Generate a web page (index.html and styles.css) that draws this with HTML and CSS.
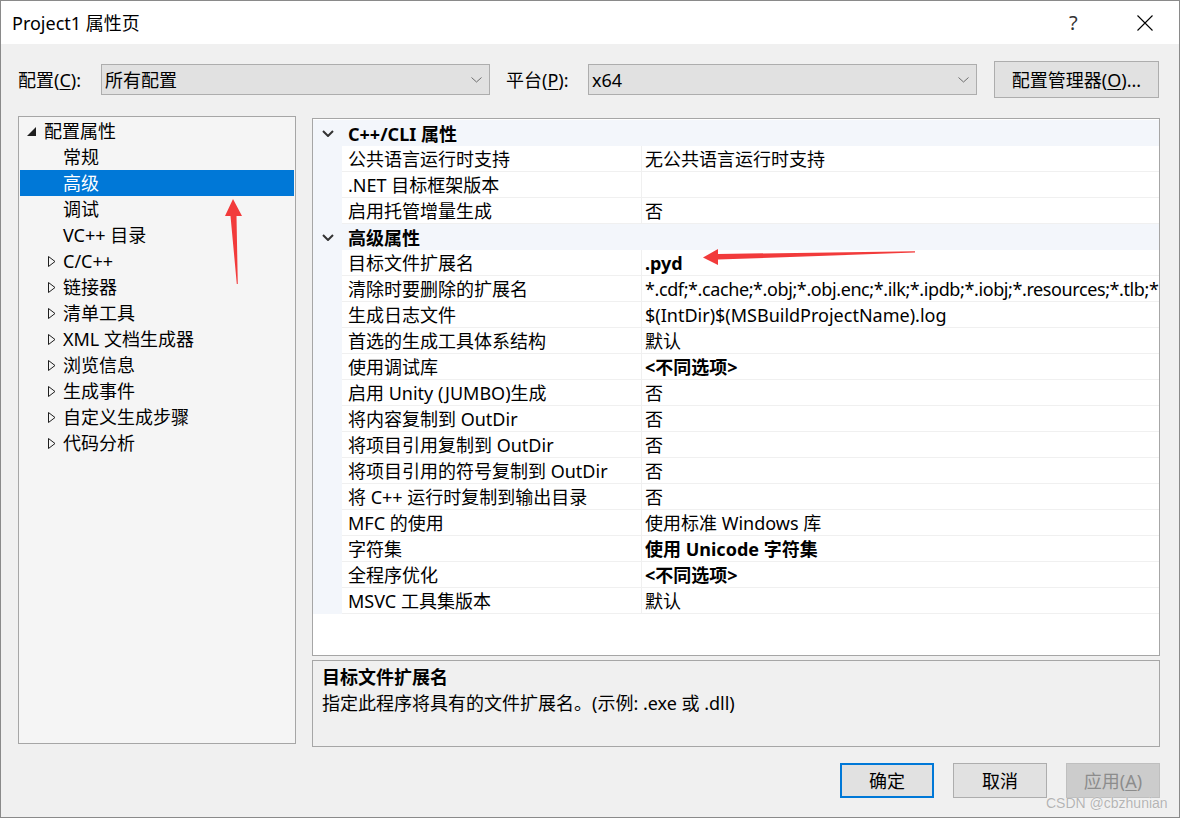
FILE: index.html
```html
<!DOCTYPE html>
<html lang="zh-CN">
<head>
	<meta charset="UTF-8">
	<title>Project1 属性页</title>
	<link rel="stylesheet" href="styles.css">
</head>
<body>
<div class="dlg">
	<div class="dlg-title">
		<span class="dlg-title-text">Project1 属性页</span>
		<span class="dlg-help">?</span>
		<span class="dlg-close">
			<svg width="16" height="16" viewBox="0 0 16 16"><path d="M0.5 0.5L15.5 15.5M15.5 0.5L0.5 15.5" stroke="#000" stroke-width="1.1" fill="none"/></svg>
		</span>
	</div>
	<div class="dlg-body">
		<div class="toolbar">
			<span class="tb-label tb-label-cfg">配置(<u>C</u>):</span>
			<div class="combo">
				<span class="combo-text">所有配置</span>
				<svg class="combo-arrow" width="11" height="6" viewBox="0 0 11 6"><path d="M0.5 0.5L5.5 5L10.5 0.5" stroke="#6d6d6d" fill="none"/></svg>
			</div>
			<span class="tb-label tb-label-plat">平台(<u>P</u>):</span>
			<div class="combo">
				<span class="combo-text">x64</span>
				<svg class="combo-arrow" width="11" height="6" viewBox="0 0 11 6"><path d="M0.5 0.5L5.5 5L10.5 0.5" stroke="#6d6d6d" fill="none"/></svg>
			</div>
			<span class="btn btn-manager">配置管理器(<u>O</u>)...</span>
		</div>

		<div class="main">
			<div class="tree">
				<div class="node node-root">
					<span class="twisty"><svg width="9" height="9" viewBox="0 0 9 9"><path d="M9 0L9 9L0 9Z" fill="#1e1e1e"/></svg></span>
					<span>配置属性</span>
				</div>
				<div class="node node-leaf">常规</div>
				<div class="node node-leaf node-current">高级</div>
				<div class="node node-leaf">调试</div>
				<div class="node node-leaf">VC++ 目录</div>
				<div class="node node-sub"><span class="twisty"><svg width="8" height="11" viewBox="0 0 8 11"><path d="M0.5 0.5L7 5.5L0.5 10.5Z" stroke="#1e1e1e" fill="none"/></svg></span><span>C/C++</span></div>
				<div class="node node-sub"><span class="twisty"><svg width="8" height="11" viewBox="0 0 8 11"><path d="M0.5 0.5L7 5.5L0.5 10.5Z" stroke="#1e1e1e" fill="none"/></svg></span><span>链接器</span></div>
				<div class="node node-sub"><span class="twisty"><svg width="8" height="11" viewBox="0 0 8 11"><path d="M0.5 0.5L7 5.5L0.5 10.5Z" stroke="#1e1e1e" fill="none"/></svg></span><span>清单工具</span></div>
				<div class="node node-sub"><span class="twisty"><svg width="8" height="11" viewBox="0 0 8 11"><path d="M0.5 0.5L7 5.5L0.5 10.5Z" stroke="#1e1e1e" fill="none"/></svg></span><span>XML 文档生成器</span></div>
				<div class="node node-sub"><span class="twisty"><svg width="8" height="11" viewBox="0 0 8 11"><path d="M0.5 0.5L7 5.5L0.5 10.5Z" stroke="#1e1e1e" fill="none"/></svg></span><span>浏览信息</span></div>
				<div class="node node-sub"><span class="twisty"><svg width="8" height="11" viewBox="0 0 8 11"><path d="M0.5 0.5L7 5.5L0.5 10.5Z" stroke="#1e1e1e" fill="none"/></svg></span><span>生成事件</span></div>
				<div class="node node-sub"><span class="twisty"><svg width="8" height="11" viewBox="0 0 8 11"><path d="M0.5 0.5L7 5.5L0.5 10.5Z" stroke="#1e1e1e" fill="none"/></svg></span><span>自定义生成步骤</span></div>
				<div class="node node-sub"><span class="twisty"><svg width="8" height="11" viewBox="0 0 8 11"><path d="M0.5 0.5L7 5.5L0.5 10.5Z" stroke="#1e1e1e" fill="none"/></svg></span><span>代码分析</span></div>
			</div>

			<div class="side">
				<div class="grid">
					<div class="cat">
						<span class="cat-chev"><svg width="12" height="7" viewBox="0 0 12 7"><path d="M1 1L6 6L11 1" stroke="#333" stroke-width="2" fill="none"/></svg></span>
						<span class="cat-name">C++/CLI 属性</span>
					</div>
					<div class="prop"><span class="prop-gut"></span><span class="prop-name">公共语言运行时支持</span><span class="prop-val">无公共语言运行时支持</span></div>
					<div class="prop"><span class="prop-gut"></span><span class="prop-name">.NET 目标框架版本</span><span class="prop-val"></span></div>
					<div class="prop"><span class="prop-gut"></span><span class="prop-name">启用托管增量生成</span><span class="prop-val">否</span></div>
					<div class="cat">
						<span class="cat-chev"><svg width="12" height="7" viewBox="0 0 12 7"><path d="M1 1L6 6L11 1" stroke="#333" stroke-width="2" fill="none"/></svg></span>
						<span class="cat-name">高级属性</span>
					</div>
					<div class="prop"><span class="prop-gut"></span><span class="prop-name">目标文件扩展名</span><span class="prop-val bold">.pyd</span></div>
					<div class="prop"><span class="prop-gut"></span><span class="prop-name">清除时要删除的扩展名</span><span class="prop-val prop-clip">*.cdf;*.cache;*.obj;*.obj.enc;*.ilk;*.ipdb;*.iobj;*.resources;*.tlb;*</span></div>
					<div class="prop"><span class="prop-gut"></span><span class="prop-name">生成日志文件</span><span class="prop-val">$(IntDir)$(MSBuildProjectName).log</span></div>
					<div class="prop"><span class="prop-gut"></span><span class="prop-name">首选的生成工具体系结构</span><span class="prop-val">默认</span></div>
					<div class="prop"><span class="prop-gut"></span><span class="prop-name">使用调试库</span><span class="prop-val bold">&lt;不同选项&gt;</span></div>
					<div class="prop"><span class="prop-gut"></span><span class="prop-name">启用 Unity (JUMBO)生成</span><span class="prop-val">否</span></div>
					<div class="prop"><span class="prop-gut"></span><span class="prop-name">将内容复制到 OutDir</span><span class="prop-val">否</span></div>
					<div class="prop"><span class="prop-gut"></span><span class="prop-name">将项目引用复制到 OutDir</span><span class="prop-val">否</span></div>
					<div class="prop"><span class="prop-gut"></span><span class="prop-name">将项目引用的符号复制到 OutDir</span><span class="prop-val">否</span></div>
					<div class="prop"><span class="prop-gut"></span><span class="prop-name">将 C++ 运行时复制到输出目录</span><span class="prop-val">否</span></div>
					<div class="prop"><span class="prop-gut"></span><span class="prop-name">MFC 的使用</span><span class="prop-val">使用标准 Windows 库</span></div>
					<div class="prop"><span class="prop-gut"></span><span class="prop-name">字符集</span><span class="prop-val bold">使用 Unicode 字符集</span></div>
					<div class="prop"><span class="prop-gut"></span><span class="prop-name">全程序优化</span><span class="prop-val bold">&lt;不同选项&gt;</span></div>
					<div class="prop"><span class="prop-gut"></span><span class="prop-name">MSVC 工具集版本</span><span class="prop-val">默认</span></div>
				</div>
				<div class="desc">
					<div class="desc-title">目标文件扩展名</div>
					<div class="desc-text">指定此程序将具有的文件扩展名。(示例: .exe 或 .dll)</div>
				</div>
			</div>
		</div>

		<div class="buttons">
			<span class="btn btn-ok">确定</span>
			<span class="btn">取消</span>
			<span class="btn btn-disabled">应用(<u>A</u>)</span>
		</div>
	</div>

	<!-- red annotation arrows drawn over the dialog -->
	<svg class="marks" width="1180" height="818" viewBox="0 0 1180 818">
		<path d="M233 199L242 216L236.5 216L237.8 284L236.8 284L230.5 216L225 216Z" fill="#f23b3b"/>
		<path d="M703 257.5L718 249L718 254L915 251.3L915 252.6L718 259.5L718 265Z" fill="#f23b3b"/>
	</svg>
	<div class="watermark">CSDN @cbzhunian</div>
</div>
</body>
</html>
```

FILE: styles.css
```css
*{margin: 0; padding: 0; box-sizing: border-box}
body{
	background: #fff;
	font-family: "Noto Sans", "Noto Sans CJK SC", sans-serif;
	font-size: 18px;
	color: #000;
}
u{text-decoration: underline; text-underline-offset: 2px}

.dlg{
	width: 1180px;
	height: 818px;
	border: 1px solid #8a8a8a;
	background: #f0f0f0;
	position: relative;
	overflow: hidden;
}
.dlg-title{
	height: 43px;
	background: #fff;
	display: flex;
	align-items: center;
	padding-left: 11px;
}
.dlg-title-text{
	flex: 1;
	line-height: 26px;
}
.dlg-help{
	font-size: 20px;
	color: #333;
	width: 20px;
	margin-right: 48px;
	line-height: 26px;
}
.dlg-close{
	width: 16px;
	height: 16px;
	margin-right: 26px;
	margin-top: 1px;
}
.dlg-close svg{display: block}

.dlg-body{
	padding: 17px 19px 0 17px;
}

/* top row */
.toolbar{
	display: flex;
	align-items: center;
	height: 37px;
}
.tb-label{line-height: 26px}
.tb-label-cfg{width: 83px}
.tb-label-plat{width: 82px; margin-left: 16px}
.combo{
	width: 389px;
	height: 31px;
	border: 1px solid #adadad;
	background: #e1e1e1;
	display: flex;
	align-items: center;
	padding: 0 7px 0 3px;
}
.combo-text{flex: 1; line-height: 26px}
.btn{
	display: flex;
	align-items: center;
	justify-content: center;
	border: 1px solid #adadad;
	background: #e1e1e1;
	line-height: 26px;
}
.btn-manager{
	width: 165px;
	height: 37px;
	margin-left: 17px;
}

/* tree + grid */
.main{
	display: flex;
	align-items: flex-start;
	margin-top: 18px;
}
.tree{
	width: 278px;
	height: 628px;
	border: 1px solid #a6a6a6;
	background: #f5f5f5;
	padding: 1px;
}
.node{
	height: 26px;
	line-height: 26px;
	display: flex;
	align-items: center;
	white-space: nowrap;
}
.twisty{
	display: flex;
	align-items: center;
}
.node-root{padding-left: 7px}
.node-root .twisty{width: 17px}
.node-leaf{padding-left: 43px}
.node-sub{padding-left: 28px}
.node-sub .twisty{width: 15px}
.node-current{
	background: #0078d7;
	color: #fff;
}

.side{
	width: 848px;
	margin-left: 16px;
	padding-top: 2px;
}
.grid{
	height: 538px;
	border: 1px solid #a6a6a6;
	background: #fff;
	overflow: hidden;
	padding-top: 1px;
}
.cat{
	height: 26px;
	background: #f3f6fb;
	display: flex;
	align-items: center;
}
.cat-chev{
	width: 35px;
	padding-left: 9px;
	display: flex;
	align-items: center;
}
.cat-name{
	font-weight: bold;
	line-height: 26px;
	padding-top: 1px;
}
.prop{
	height: 26px;
	display: flex;
	line-height: 26px;
	white-space: nowrap;
}
.prop-gut{
	width: 29px;
	background: #f3f6fb;
}
.prop-name{
	width: 300px;
	padding-left: 6px;
	border-right: 1px solid #f0f0f0;
	border-bottom: 1px solid #f0f0f0;
}
.prop-val{
	flex: 1;
	padding-left: 3px;
	border-bottom: 1px solid #f0f0f0;
	overflow: hidden;
}
.prop-clip{letter-spacing: -0.4px}
.bold{font-weight: bold}

.desc{
	height: 87px;
	margin-top: 4px;
	border: 1px solid #a6a6a6;
	background: #f0f0f0;
	padding: 3px 9px;
	line-height: 26px;
}
.desc-title{font-weight: bold}

/* bottom buttons */
.buttons{
	display: flex;
	justify-content: flex-end;
	gap: 19px;
	margin-top: 16px;
}
.buttons .btn{
	width: 94px;
	height: 35px;
}
.buttons .btn-ok{
	border: 2px solid #0078d7;
}
.buttons .btn-disabled{
	background: #cccccc;
	border-color: #bfbfbf;
	color: #8c8c8c;
}

.marks{
	position: absolute;
	left: -1px;
	top: -1px;
	pointer-events: none;
}
.watermark{
	position: absolute;
	left: 1045px;
	top: 794px;
	font-family: "Liberation Sans", Arial, sans-serif;
	font-size: 14px;
	color: #b4b4b4;
	text-shadow: 0 0 1px #fff;
	white-space: nowrap;
}
```
